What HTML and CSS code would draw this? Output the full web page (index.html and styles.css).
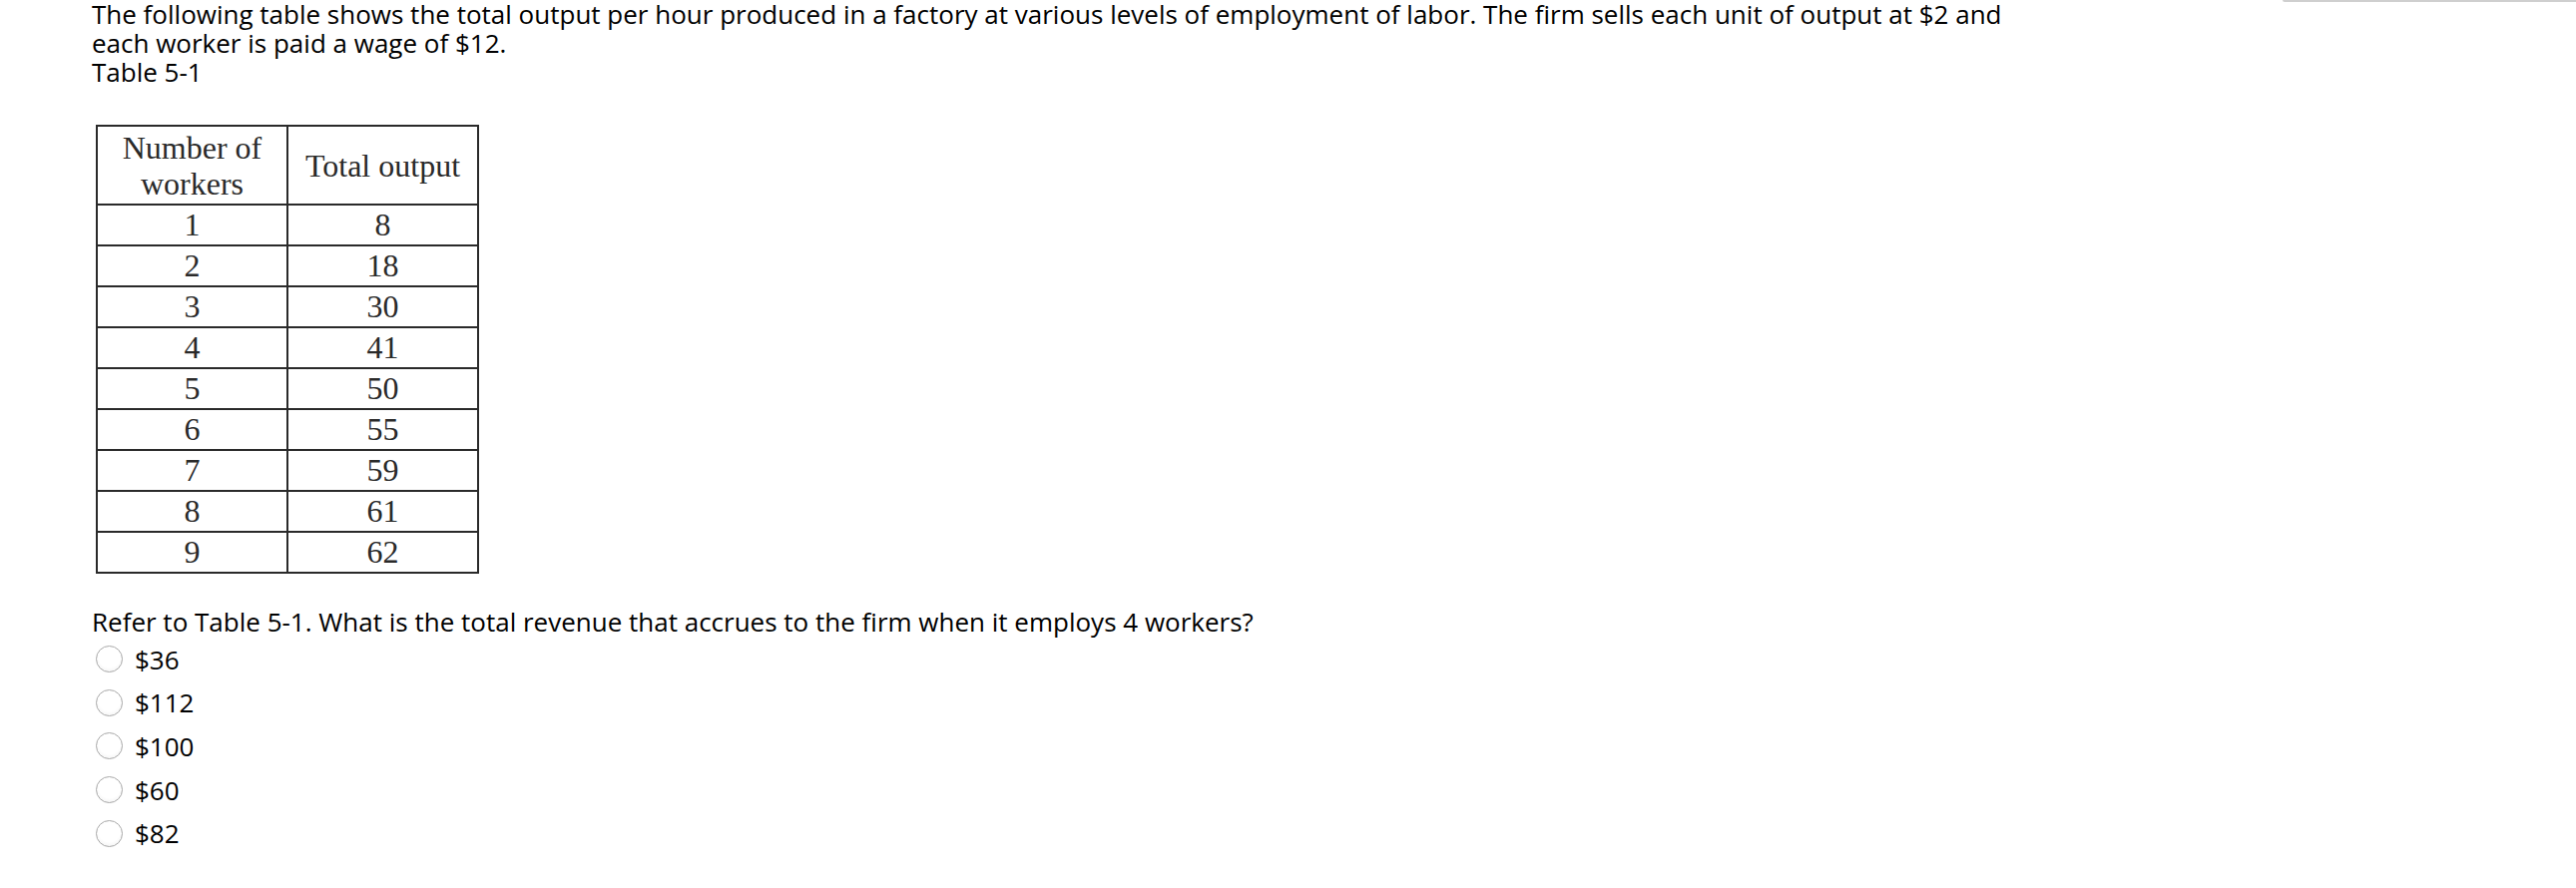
FILE: index.html
```html
<!DOCTYPE html>
<html>
<head>
<meta charset="utf-8">
<link rel="stylesheet" href="styles.css">
</head>
<body>
<div class="topline"></div>
<div class="page">
  <p class="intro">The following table shows the total output per hour produced in a factory at various levels of employment of labor. The firm sells each unit of output at $2 and each worker is paid a wage of $12.<br>Table 5-1</p>
  <table class="data">
    <tr class="head"><td class="c1">Number of<br>workers</td><td class="c2">Total output</td></tr>
    <tr><td>1</td><td>8</td></tr>
    <tr><td>2</td><td>18</td></tr>
    <tr><td>3</td><td>30</td></tr>
    <tr><td>4</td><td>41</td></tr>
    <tr><td>5</td><td>50</td></tr>
    <tr><td>6</td><td>55</td></tr>
    <tr><td>7</td><td>59</td></tr>
    <tr><td>8</td><td>61</td></tr>
    <tr><td>9</td><td>62</td></tr>
  </table>
  <p class="question">Refer to Table 5-1. What is the total revenue that accrues to the firm when it employs 4 workers?</p>
  <ul class="options">
    <li><span class="radio"></span><span>$36</span></li>
    <li><span class="radio"></span><span>$112</span></li>
    <li><span class="radio"></span><span>$100</span></li>
    <li><span class="radio"></span><span>$60</span></li>
    <li><span class="radio"></span><span>$82</span></li>
  </ul>
</div>
</body>
</html>
```
FILE: styles.css
```css
html, body {
  margin: 0;
  padding: 0;
  background: #fff;
}
body {
  font-family: "Open Sans", sans-serif;
  color: #000;
  position: relative;
}
.topline {
  position: absolute;
  top: 0;
  left: 2287px;
  right: 0;
  height: 2px;
  background: #cfcfcf;
  border-bottom-left-radius: 2px;
}
.page {
  padding-left: 92px;
}
.intro {
  margin: 0;
  width: 1950px;
  font-size: 26px;
  line-height: 29px;
}
.data {
  margin: 38px 0 0 4px;
  border-collapse: collapse;
  font-family: "Liberation Serif", serif;
  font-size: 32px;
  color: #2a2a2a;
}
.data td {
  border: 2px solid #2a2a2a;
  text-align: center;
  height: 39px;
  padding: 0;
  line-height: 39px;
}
.data .head td {
  height: 77px;
  line-height: 36px;
}
.data .c1 { width: 189px; }
.data .c2 { width: 189px; }
.question {
  margin: 34px 0 0;
  font-size: 26px;
  line-height: 29px;
}
.options {
  list-style: none;
  margin: 1px 0 0;
  padding: 0;
}
.options li {
  display: flex;
  align-items: center;
  height: 43.6px;
  font-size: 26px;
}
.radio {
  box-sizing: border-box;
  width: 27px;
  height: 27px;
  border-radius: 50%;
  border: 1.5px solid #a8a8a8;
  background: radial-gradient(circle at 50% 40%, #ffffff 55%, #ececec 100%);
  margin-left: 4px;
  margin-right: 12px;
}
```
